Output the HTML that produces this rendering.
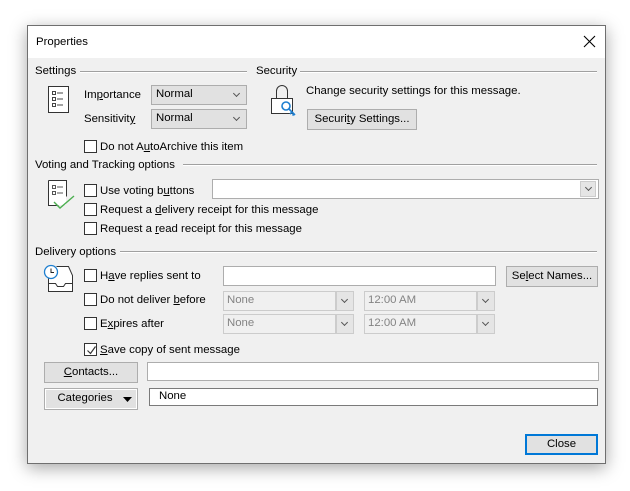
<!DOCTYPE html>
<html><head><style>
*{box-sizing:border-box;margin:0;padding:0}
body{width:630px;height:491px;background:#fff;position:relative;overflow:hidden;font-family:"Liberation Sans",sans-serif;font-size:11.4px;color:#000}
.dlg{position:absolute;left:27px;top:25px;width:579px;height:439px;background:#f0f0f0;border:1px solid #6f6f6f;box-shadow:0 4px 16px rgba(0,0,0,.35)}
.tb{position:absolute;left:0;top:0;width:577px;height:32px;background:#fff}
.a{position:absolute;white-space:nowrap}
.t{position:absolute;white-space:nowrap;line-height:14px}
.hr{position:absolute;height:2px;border-top:1px solid #a0a0a0;border-bottom:1px solid #fff}
.cb{position:absolute;width:13px;height:13px;border:1px solid #333;background:#fff}
.cmb{position:absolute;background:#e1e1e1;border:1px solid #adadad}
.btn{position:absolute;background:#e1e1e1;border:1px solid #adadad;text-align:center;line-height:18px}
.tx{position:absolute;background:#fff;border:1px solid #adadad}
.dis{position:absolute;background:#f0f0f0;border:1px solid #cccccc;color:#838383;padding-left:3px;line-height:17px}
.dd{position:absolute;background:#e5e5e5;border:1px solid #cccccc}
.chev{position:absolute;width:5px;height:5px;border-right:1px solid #555;border-bottom:1px solid #555;transform:rotate(45deg)}
u{text-decoration:underline}
</style></head><body>
<div class="dlg"><div class="tb"></div></div>
<div class="t" style="left:36px;top:35px">Properties</div>
<svg class="a" style="left:583px;top:35px" width="13" height="13"><path d="M1 1L12 12M12 1L1 12" stroke="#000" stroke-width="1.1"/></svg>

<div class="t" style="left:35px;top:64px">Settings</div>
<div class="hr" style="left:80px;top:71px;width:167px"></div>
<div class="t" style="left:256px;top:64px">Security</div>
<div class="hr" style="left:300px;top:71px;width:297px"></div>

<svg class="a" style="left:47px;top:85px" width="24" height="30"><rect x="1.5" y="1.5" width="20" height="26" fill="#fff" stroke="#333"/><g fill="none" stroke="#444"><rect x="5.5" y="6.5" width="3" height="3"/><rect x="5.5" y="12.5" width="3" height="3"/><rect x="5.5" y="18.5" width="3" height="3"/></g><path d="M10 8h6M10 14h6M10 20h6" stroke="#444"/></svg>
<div class="t" style="left:84px;top:88px">Im<u>p</u>ortance</div>
<div class="cmb" style="left:151px;top:85px;width:96px;height:20px"><span class="a" style="left:4px;top:2px">Normal</span><div class="chev" style="left:82px;top:5px"></div></div>
<div class="t" style="left:84px;top:112px">Sensitivit<u>y</u></div>
<div class="cmb" style="left:151px;top:109px;width:96px;height:20px"><span class="a" style="left:4px;top:2px">Normal</span><div class="chev" style="left:82px;top:5px"></div></div>
<div class="cb" style="left:84px;top:140px"></div>
<div class="t" style="left:100px;top:140px">Do not A<u>u</u>toArchive this item</div>

<svg class="a" style="left:269px;top:84px" width="30" height="34"><path d="M7.5 15V7a5.5 5.5 0 0 1 11 0v8" fill="none" stroke="#333"/><rect x="2.5" y="14.5" width="21" height="15" fill="#fff" stroke="#333"/><circle cx="17" cy="22" r="4" fill="#fff" stroke="#1e7fd0" stroke-width="1.6"/><path d="M20 25l6 6M23 28l-2 2M25 30l-1.5 1.5" stroke="#1e7fd0" stroke-width="1.6" fill="none"/></svg>
<div class="t" style="left:306px;top:84px">Change security settings for this message.</div>
<div class="btn" style="left:307px;top:109px;width:110px;height:21px">Securi<u>t</u>y Settings...</div>

<div class="t" style="left:35px;top:158px">Voting and Tracking options</div>
<div class="hr" style="left:183px;top:164px;width:414px"></div>
<svg class="a" style="left:46px;top:178px" width="32" height="32"><rect x="3" y="3" width="17" height="24" fill="#fff"/><path d="M2.5 2.5h18v16M2.5 2.5v25h10" fill="none" stroke="#333"/><g fill="none" stroke="#555"><rect x="6.5" y="7.5" width="3" height="3"/><rect x="6.5" y="13.5" width="3" height="3"/></g><path d="M11 9h6M11 15h6" stroke="#555"/><path d="M8 24l6 6 14-12" fill="none" stroke="#4caf50" stroke-width="1.4"/></svg>
<div class="cb" style="left:84px;top:184px"></div>
<div class="t" style="left:100px;top:184px">Use voting b<u>u</u>ttons</div>
<div class="tx" style="left:212px;top:179px;width:387px;height:20px"><div class="dd" style="left:367px;top:1px;width:16px;height:16px"></div><div class="chev" style="left:373px;top:5px"></div></div>
<div class="cb" style="left:84px;top:203px"></div>
<div class="t" style="left:100px;top:203px">Request a <u>d</u>elivery receipt for this message</div>
<div class="cb" style="left:84px;top:222px"></div>
<div class="t" style="left:100px;top:222px">Request a <u>r</u>ead receipt for this message</div>

<div class="t" style="left:35px;top:245px">Delivery options</div>
<div class="hr" style="left:120px;top:251px;width:477px"></div>
<svg class="a" style="left:42px;top:263px" width="34" height="32"><path d="M6.5 12.5v16h24v-16l-4-9h-12" fill="#fff" stroke="#333"/><path d="M6.5 20.5h7l2 3h6l2-3h7" fill="none" stroke="#333"/><circle cx="9" cy="9" r="6.5" fill="#fff" stroke="#1e7fd0" stroke-width="1.3"/><path d="M9 5.5v4h3" fill="none" stroke="#222"/></svg>
<div class="cb" style="left:84px;top:269px"></div>
<div class="t" style="left:100px;top:269px">H<u>a</u>ve replies sent to</div>
<div class="tx" style="left:223px;top:266px;width:273px;height:20px"></div>
<div class="btn" style="left:506px;top:266px;width:92px;height:21px">Se<u>l</u>ect Names...</div>
<div class="cb" style="left:84px;top:293px"></div>
<div class="t" style="left:100px;top:293px">Do not deliver <u>b</u>efore</div>
<div class="dis" style="left:223px;top:291px;width:113px;height:20px">None</div>
<div class="dd" style="left:336px;top:291px;width:18px;height:20px"><div class="chev" style="left:5px;top:5px"></div></div>
<div class="dis" style="left:364px;top:291px;width:113px;height:20px">12:00 AM</div>
<div class="dd" style="left:477px;top:291px;width:18px;height:20px"><div class="chev" style="left:5px;top:5px"></div></div>
<div class="cb" style="left:84px;top:317px"></div>
<div class="t" style="left:100px;top:317px">E<u>x</u>pires after</div>
<div class="dis" style="left:223px;top:314px;width:113px;height:20px">None</div>
<div class="dd" style="left:336px;top:314px;width:18px;height:20px"><div class="chev" style="left:5px;top:5px"></div></div>
<div class="dis" style="left:364px;top:314px;width:113px;height:20px">12:00 AM</div>
<div class="dd" style="left:477px;top:314px;width:18px;height:20px"><div class="chev" style="left:5px;top:5px"></div></div>
<div class="cb" style="left:84px;top:343px"><svg class="a" style="left:1px;top:1px" width="11" height="11"><path d="M1.5 5.5l3 3 5-7" fill="none" stroke="#333" stroke-width="1.2"/></svg></div>
<div class="t" style="left:100px;top:343px"><u>S</u>ave copy of sent message</div>

<div class="btn" style="left:44px;top:362px;width:94px;height:21px"><u>C</u>ontacts...</div>
<div class="tx" style="left:147px;top:362px;width:452px;height:19px"></div>
<div class="btn" style="left:44px;top:388px;width:94px;height:22px;box-shadow:inset 0 0 0 1px #fff"><span style="margin-left:-12px">Cate<u>g</u>ories</span><svg class="a" style="left:78px;top:8px" width="10" height="6"><path d="M0 0h9L4.5 5z" fill="#000"/></svg></div>
<div class="tx" style="left:149px;top:388px;width:449px;height:18px;border-color:#7a7a7a"><span class="a" style="left:9px;top:1px">None</span></div>

<div class="btn" style="left:525px;top:434px;width:73px;height:21px;border:2px solid #0078d7;line-height:17px">Close</div>
</body></html>
